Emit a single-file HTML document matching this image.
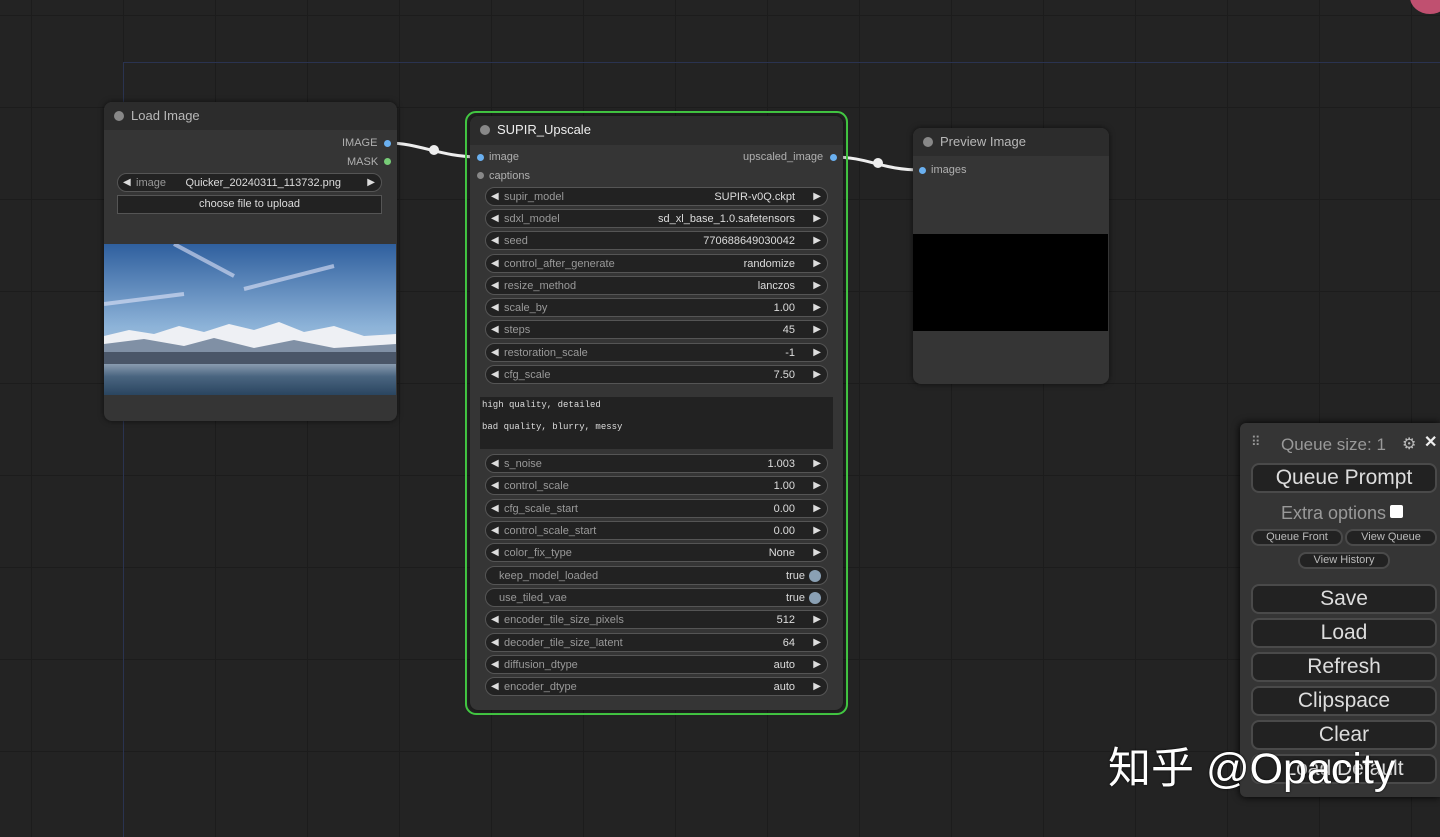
<!DOCTYPE html>
<html><head><meta charset="utf-8"><style>
*{box-sizing:border-box;margin:0;padding:0}
body{width:1440px;height:837px;overflow:hidden;background:#232323;font-family:"Liberation Sans",Arial,sans-serif;position:relative;
background-image:linear-gradient(#1c1c1c 1px,transparent 1px),linear-gradient(90deg,#1c1c1c 1px,transparent 1px);background-size:92px 92px;background-position:31px 15px;}
.abs{position:absolute}
.node{position:absolute;background:#353535;border-radius:8px;box-shadow:0 0 6px rgba(0,0,0,.6)}
.title{height:28px;background:#2c2c2c;border-radius:8px 8px 0 0;color:#b8b8b8;font-size:13px;line-height:28px;padding-left:27px;position:relative}
.title:before{content:"";position:absolute;left:10px;top:9px;width:10px;height:10px;border-radius:50%;background:#888}
.w{position:absolute;left:485px;width:343px;height:19px;border:1px solid #555;background:#222;border-radius:10px;color:#999;font-size:11px;line-height:18px;padding-left:18px}
.w:before{content:"◀";position:absolute;left:5px;color:#ddd;font-size:10px}
.w:after{content:"▶";position:absolute;right:6px;color:#ddd;font-size:10px;top:0}
.w span{position:absolute;right:32px;color:#ddd}
.t{padding-left:13px}.t:before,.t:after{content:none}
.t span{right:22px}
.t i{position:absolute;right:6px;top:3px;width:12px;height:12px;border-radius:50%;background:#8aa0b4}
.dot{position:absolute;width:7px;height:7px;border-radius:50%}
.lbl{position:absolute;font-size:11px;color:#b0b0b0}
.btn{position:absolute;left:1251px;width:186px;height:30px;border:2px solid #4a4a4a;border-radius:8px;background:#222;color:#ddd;font-size:21px;text-align:center;line-height:26px}
.sb{position:absolute;height:17px;border:2px solid #4a4a4a;border-radius:8px;background:#222;color:#bbb;font-size:11px;text-align:center;line-height:13px}
</style></head><body>
<div class="abs" style="left:123px;top:62px;width:1317px;height:1px;background:#2a3350"></div>
<div class="abs" style="left:123px;top:62px;width:1px;height:775px;background:#2a3350"></div>
<div class="abs" style="left:1410px;top:-20px;width:40px;height:34px;border-radius:50%;background:#c05070"></div>

<svg class="abs" style="left:0;top:0" width="1440" height="837">
<path d="M388 143 C420 143 440 157 480 157" stroke="#eee" stroke-width="3" fill="none"/>
<circle cx="434" cy="150" r="5" fill="#eee"/>
<path d="M833 157 C870 157 880 170 922 170" stroke="#eee" stroke-width="3" fill="none"/>
<circle cx="878" cy="163" r="5" fill="#eee"/>
</svg>

<div class="node" style="left:104px;top:102px;width:293px;height:319px">
<div class="title">Load Image</div>
</div>
<div class="lbl" style="left:342px;top:137px">IMAGE</div><div class="dot" style="left:384px;top:140px;background:#6ab0f0"></div>
<div class="lbl" style="left:347px;top:156px">MASK</div><div class="dot" style="left:384px;top:158px;background:#7c7"></div>
<div class="w" style="left:117px;top:173px;width:265px;"><span style="right:40px">Quicker_20240311_113732.png</span>image</div>
<div class="abs" style="left:117px;top:195px;width:265px;height:19px;border:1px solid #555;background:#222;color:#ddd;font-size:11px;text-align:center;line-height:17px">choose file to upload</div>
<svg class="abs" style="left:104px;top:244px" width="292" height="151">
<defs><linearGradient id="s" x1="0" y1="0" x2="0" y2="1"><stop offset="0" stop-color="#2f5f9e"/><stop offset=".55" stop-color="#8db3d8"/><stop offset="1" stop-color="#c8d8e6"/></linearGradient>
<linearGradient id="wa" x1="0" y1="0" x2="0" y2="1"><stop offset="0" stop-color="#8a9cb0"/><stop offset=".4" stop-color="#4a6580"/><stop offset="1" stop-color="#2a4560"/></linearGradient></defs>
<rect width="292" height="151" fill="url(#s)"/>
<path d="M70 0 L130 32 M140 45 L230 22 M0 60 L80 50" stroke="#eef" stroke-width="4" opacity=".55"/>
<path d="M0 92 L25 86 L50 90 L75 82 L100 88 L125 80 L150 86 L175 78 L200 88 L230 82 L260 92 L292 90 L292 116 L0 116Z" fill="#eef0f4"/>
<path d="M0 100 L40 95 L80 102 L110 94 L150 104 L190 96 L230 104 L292 100 L292 118 L0 118Z" fill="#8090a5"/>
<path d="M0 108 L292 108 L292 120 L0 120Z" fill="#4a5668"/>
<rect y="120" width="292" height="31" fill="url(#wa)"/>
</svg>

<div class="abs" style="left:465px;top:111px;width:383px;height:604px;border:2px solid #4c4;border-radius:11px"></div>
<div class="node" style="left:470px;top:116px;width:373px;height:594px">
<div class="title" style="color:#eee;height:29px">SUPIR_Upscale</div>
</div>
<div class="dot" style="left:477px;top:154px;background:#6ab0f0"></div><div class="lbl" style="left:489px;top:151px">image</div>
<div class="dot" style="left:477px;top:172px;background:#888"></div><div class="lbl" style="left:489px;top:170px">captions</div>
<div class="lbl" style="left:743px;top:151px">upscaled_image</div><div class="dot" style="left:830px;top:154px;background:#6ab0f0"></div>

<div class="w" style="top:187px">supir_model<span>SUPIR-v0Q.ckpt</span></div>
<div class="w" style="top:209px">sdxl_model<span>sd_xl_base_1.0.safetensors</span></div>
<div class="w" style="top:231px">seed<span>770688649030042</span></div>
<div class="w" style="top:254px">control_after_generate<span>randomize</span></div>
<div class="w" style="top:276px">resize_method<span>lanczos</span></div>
<div class="w" style="top:298px">scale_by<span>1.00</span></div>
<div class="w" style="top:320px">steps<span>45</span></div>
<div class="w" style="top:343px">restoration_scale<span>-1</span></div>
<div class="w" style="top:365px">cfg_scale<span>7.50</span></div>
<div class="abs" style="left:480px;top:397px;width:353px;height:52px;background:#222;color:#ddd;font-family:'Liberation Mono',monospace;font-size:9px;padding:3px 2px;line-height:11px">high quality, detailed<br><br>bad quality, blurry, messy</div>
<div class="w" style="top:454px">s_noise<span>1.003</span></div>
<div class="w" style="top:476px">control_scale<span>1.00</span></div>
<div class="w" style="top:499px">cfg_scale_start<span>0.00</span></div>
<div class="w" style="top:521px">control_scale_start<span>0.00</span></div>
<div class="w" style="top:543px">color_fix_type<span>None</span></div>
<div class="w t" style="top:566px">keep_model_loaded<span>true</span><i></i></div>
<div class="w t" style="top:588px">use_tiled_vae<span>true</span><i></i></div>
<div class="w" style="top:610px">encoder_tile_size_pixels<span>512</span></div>
<div class="w" style="top:633px">decoder_tile_size_latent<span>64</span></div>
<div class="w" style="top:655px">diffusion_dtype<span>auto</span></div>
<div class="w" style="top:677px">encoder_dtype<span>auto</span></div>

<div class="node" style="left:913px;top:128px;width:196px;height:256px">
<div class="title">Preview Image</div>
</div>
<div class="dot" style="left:919px;top:167px;background:#6ab0f0"></div><div class="lbl" style="left:931px;top:164px">images</div>
<div class="abs" style="left:913px;top:234px;width:195px;height:97px;background:#000"></div>

<div class="abs" style="left:1240px;top:423px;width:200px;height:374px;background:#353535;border-radius:6px 0 0 6px;box-shadow:0 0 8px #000"></div>
<div class="abs" style="left:1251px;top:434px;color:#999;font-size:13px;letter-spacing:1px">⠿</div>
<div class="abs" style="left:1281px;top:435px;color:#999;font-size:17px">Queue size: 1</div>
<div class="abs" style="left:1402px;top:434px;color:#bbb;font-size:16px">⚙</div>
<div class="abs" style="left:1424px;top:432px;color:#eee;font-size:16px;font-weight:bold">✕</div>
<div class="btn" style="top:463px">Queue Prompt</div>
<div class="abs" style="left:1281px;top:503px;color:#999;font-size:18px">Extra options</div>
<div class="abs" style="left:1390px;top:505px;width:13px;height:13px;background:#fff;border-radius:2px"></div>
<div class="sb" style="left:1251px;top:529px;width:92px">Queue Front</div>
<div class="sb" style="left:1345px;top:529px;width:92px">View Queue</div>
<div class="sb" style="left:1298px;top:552px;width:92px">View History</div>
<div class="btn" style="top:584px">Save</div>
<div class="btn" style="top:618px">Load</div>
<div class="btn" style="top:652px">Refresh</div>
<div class="btn" style="top:686px">Clipspace</div>
<div class="btn" style="top:720px">Clear</div>
<div class="btn" style="top:754px">Load Default</div>

<div class="abs" style="left:1108px;top:742px;color:#fff;font-size:43px;font-family:'Liberation Sans','Noto Sans CJK SC',sans-serif;line-height:54px;white-space:nowrap;text-shadow:0 0 2px #000">知乎 @Opacity</div>
</body></html>
